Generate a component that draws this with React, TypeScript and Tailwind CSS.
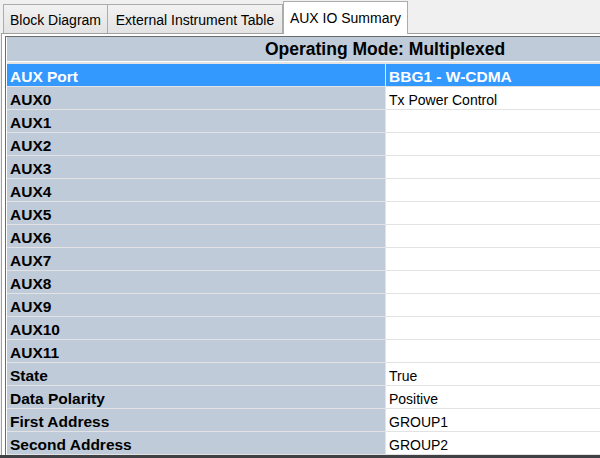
import React from 'react'

// Righe della griglia: etichetta a sinistra, valore a destra
interface Riga {
  label: string;
  value: string;
}

const righe: Riga[] = [
  { label: 'AUX0', value: 'Tx Power Control' },
  { label: 'AUX1', value: '' },
  { label: 'AUX2', value: '' },
  { label: 'AUX3', value: '' },
  { label: 'AUX4', value: '' },
  { label: 'AUX5', value: '' },
  { label: 'AUX6', value: '' },
  { label: 'AUX7', value: '' },
  { label: 'AUX8', value: '' },
  { label: 'AUX9', value: '' },
  { label: 'AUX10', value: '' },
  { label: 'AUX11', value: '' },
  { label: 'State', value: 'True' },
  { label: 'Data Polarity', value: 'Positive' },
  { label: 'First Address', value: 'GROUP1' },
  { label: 'Second Address', value: 'GROUP2' },
]

function Tab({ label, active, width }: { label: string; active?: boolean; width: string }) {
  if (active) {
    return (
      <div className={`${width} h-[33px] -mb-[1px] relative z-10 bg-white border border-b-0 border-[#acacac] flex items-center justify-center text-[14px] text-black`}>
        {label}
      </div>
    )
  }
  return (
    <div className={`${width} h-[29px] bg-gradient-to-b from-[#f2f2f2] to-[#e3e3e3] border border-b-0 border-[#acacac] flex items-center justify-center text-[14px] text-black pt-[2px]`}>
      {label}
    </div>
  )
}

export default function App() {
  return (
    <div className="w-[600px] h-[458px] bg-[#f0f0f0] overflow-hidden flex flex-col font-['Liberation_Sans',Arial,sans-serif]">

      {/* TAB BAR */}
      <div className="h-[33px] flex items-end pl-[3px] shrink-0">
        <Tab label="Block Diagram" width="w-[105px]" />
        <Tab label="External Instrument Table" width="w-[176px] -ml-[1px]" />
        <Tab label="AUX IO Summary" width="w-[125px]" active />
      </div>

      {/* PANNELLO */}
      <div className="flex-1 ml-[1px] border-t border-l border-[#a0a0a0] bg-white pl-[3px] pt-[2px] flex flex-col overflow-hidden">
        <div className="flex-1 border-t border-l border-[#6b6b6b] pl-[1px] overflow-hidden">
          <div className="w-[756px] flex flex-col">

            {/* INTESTAZIONE */}
            <div className="h-[24px] bg-[#bfcbd9] flex items-center justify-center text-[17.5px] font-bold text-black pt-[1px]">
              Operating Mode: Multiplexed
            </div>
            <div className="h-[1px] bg-white" />
            <div className="h-[2px] bg-[#e4e4e4]" />

            {/* RIGA SELEZIONATA */}
            <div className="h-[23px] flex bg-[#3399ff] text-white font-bold text-[15.5px] border-b border-[#e3e3e3]">
              <div className="w-[379px] pl-[3px] pt-[4px] flex items-center border-r border-[#e3e8ef]">AUX Port</div>
              <div className="flex-1 pl-[3px] pt-[4px] flex items-center">BBG1 - W-CDMA</div>
            </div>

            {righe.map(r => (
              <div key={r.label} className="h-[23px] flex border-b border-[#e3e3e3]">
                <div className="w-[379px] pl-[3px] pt-[4px] flex items-center bg-[#bfcbd9] border-r border-[#e3e3e3] font-bold text-[15.5px] text-black">
                  {r.label}
                </div>
                <div className="flex-1 pl-[3px] pt-[4px] flex items-center bg-white text-[14px] text-black">
                  {r.value}
                </div>
              </div>
            ))}
          </div>
        </div>
      </div>

      {/* bordo inferiore scuro */}
      <div className="h-[3px] bg-[#3f4144] shrink-0" />
    </div>
  )
}
